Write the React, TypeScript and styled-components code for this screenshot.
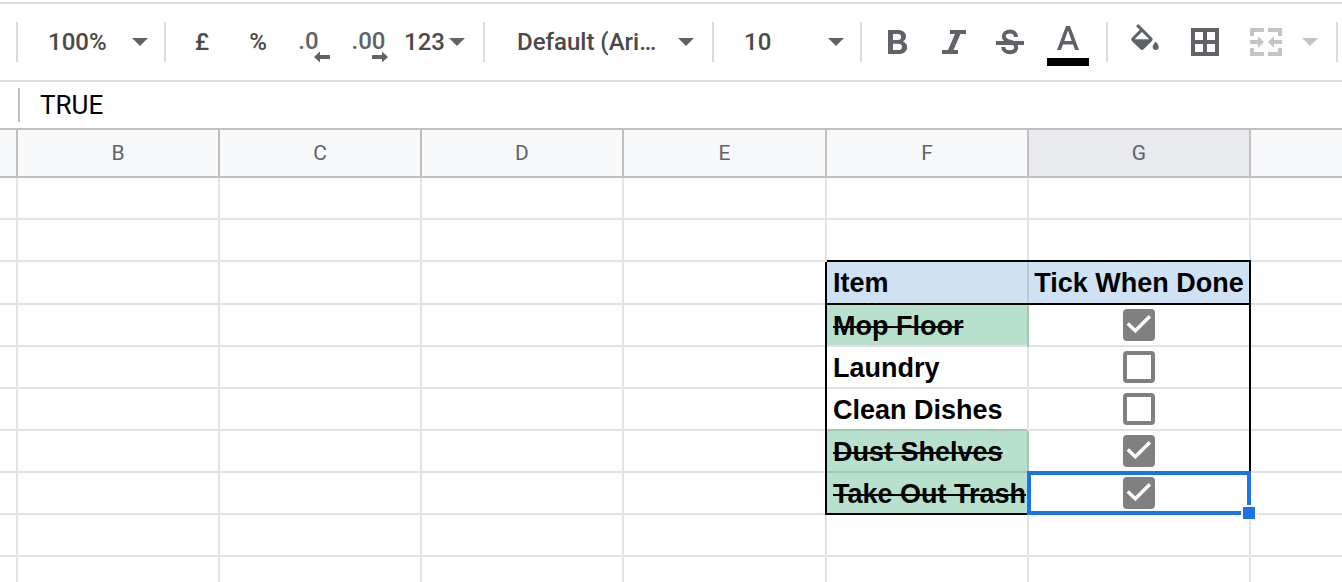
import React from "react";
import styled, { createGlobalStyle } from "styled-components";

const color = {
  rule: "#dadce0",
  headLine: "#c0c0c0",
  gridLine: "#e2e3e3",
  headFill: "#f8f9fa",
  headActive: "#e8eaed",
  icon: "#5f6368",
  text: "#4a4a4a",
  disabled: "#c4c4c4",
  black: "#000000",
  select: "#1a73e8",
  blue: "#cfe2f3",
  blueLine: "#b8c9d8",
  green: "#b7e1cd",
  greenLine: "#a3c8b6",
};

const GlobalStyle = createGlobalStyle`
  *, *::before, *::after { box-sizing: border-box; }
  body { margin: 0; background: #fff; }
`;

const Page = styled.main`
  display: flex;
  flex-direction: column;
  height: 100vh;
  overflow: hidden;
  background: #fff;
  font-family: Roboto, "Liberation Sans", sans-serif;
`;

const Toolbar = styled.div`
  display: flex;
  align-items: center;
  flex: none;
  height: 80px;
  margin-top: 2px;
  padding-left: 16px;
  border-top: 2px solid ${color.rule};
  border-bottom: 2px solid ${color.rule};
  overflow: hidden;
`;

const Divider = styled.span`
  flex: none;
  width: 2px;
  height: 40px;
  background: ${color.rule};
`;

const Group = styled.div`
  display: flex;
  flex: none;
  padding: 0 8px;
`;

const ToolButton = styled.button<{ $width?: number; $gap?: number; $padding?: string }>`
  display: flex;
  align-items: center;
  justify-content: center;
  gap: ${(p) => p.$gap ?? 0}px;
  width: ${(p) => p.$width ?? 56}px;
  height: 48px;
  padding: ${(p) => p.$padding ?? "0"};
  border: 0;
  background: none;
  color: ${(p) => (p.disabled ? color.disabled : color.icon)};
  font: 500 24px/28px Roboto, "Liberation Sans", sans-serif;

  svg {
    display: block;
    flex: none;
  }
`;

const Label = styled.span`
  color: ${color.text};
`;

const DecimalFace = styled.span<{ $overhang: number }>`
  display: flex;
  flex-direction: column;
  padding-top: 6px;

  > span {
    padding-right: ${(p) => p.$overhang}px;
  }

  svg {
    align-self: flex-end;
    margin-top: -4px;
  }
`;

const ColorFace = styled.span`
  display: flex;
  flex-direction: column;
  align-items: center;
  gap: 8px;
  padding-top: 8px;
`;

const Swatch = styled.span`
  width: 42px;
  height: 8px;
  background: ${color.black};
`;

const PickerFrame = styled.label<{ $width: number; $inset: number }>`
  display: grid;
  grid-template-columns: minmax(0, 1fr);
  align-items: center;
  flex: none;
  width: ${(p) => p.$width}px;

  > * {
    grid-area: 1 / 1;
  }

  svg {
    justify-self: end;
    margin-right: ${(p) => p.$inset}px;
    pointer-events: none;
    color: ${color.icon};
  }
`;

const PickerSelect = styled.select<{ $inset: number }>`
  appearance: none;
  width: 100%;
  height: 40px;
  padding: 0 52px 0 ${(p) => p.$inset + 14}px;
  border: 0;
  background: none;
  color: ${color.text};
  font: 500 24px/28px Roboto, "Liberation Sans", sans-serif;
  text-overflow: ellipsis;
`;

const FormulaBar = styled.label`
  display: flex;
  align-items: center;
  flex: none;
  height: 48px;
  padding-left: 18px;
  border-bottom: 2px solid ${color.headLine};
`;

const FormulaDivider = styled.span`
  width: 2px;
  height: 34px;
  background: ${color.headLine};
`;

const FormulaInput = styled.input`
  flex: 1;
  min-width: 0;
  height: 40px;
  padding: 0 20px;
  border: 0;
  outline: 0;
  background: none;
  color: ${color.black};
  font: 400 26px/32px Roboto, "Liberation Sans", sans-serif;
`;

const Sheet = styled.table`
  flex: none;
  width: 100%;
  table-layout: fixed;
  border-collapse: separate;
  border-spacing: 0;
`;

const ColumnHead = styled.th<{ $active?: boolean }>`
  height: 48px;
  padding: 0 2px 2px 0;
  background: ${(p) => (p.$active ? color.headActive : color.headFill)};
  box-shadow: inset -2px -2px 0 ${color.headLine};
  color: ${color.icon};
  font-size: 21px;
  line-height: 24px;
  font-weight: 400;
  text-align: center;

  &:last-child {
    box-shadow: inset 0 -2px 0 ${color.headLine};
  }
`;

type Edge = { $right?: string; $bottom?: string };

const edgeShadow = ({ $right = color.gridLine, $bottom = color.gridLine }: Edge) => {
  const right = `inset -2px 0 0 ${$right}`;
  const bottom = `inset 0 -2px 0 ${$bottom}`;
  return $bottom === color.black ? `${bottom}, ${right}` : `${right}, ${bottom}`;
};

const Cell = styled.td<Edge & { $fill?: string; $center?: boolean; $tall?: boolean }>`
  position: relative;
  height: ${(p) => (p.$tall ? 43 : 42)}px;
  padding: ${(p) => (p.$center ? "0 2px 2px 0" : "0 2px 2px 6px")};
  background: ${(p) => p.$fill ?? "transparent"};
  box-shadow: ${edgeShadow};
  color: ${color.black};
  font: 700 27px/32px "Liberation Sans", Arial, sans-serif;
  text-align: ${(p) => (p.$center ? "center" : "left")};
  white-space: nowrap;

  &:last-child {
    box-shadow: inset 0 -2px 0 ${color.gridLine};
  }
`;

const TaskCell = styled(Cell)<{ $done: boolean }>`
  padding-top: 2px;
  text-decoration: ${(p) => (p.$done ? "line-through 2px" : "none")};
`;

const TickFrame = styled.span`
  display: inline-grid;
  vertical-align: top;

  > * {
    grid-area: 1 / 1;
  }

  svg {
    pointer-events: none;
  }
`;

const TickInput = styled.input`
  appearance: none;
  width: 32px;
  height: 32px;
  margin: 0;
  border: 4px solid #808080;
  border-radius: 4px;
  background: #fff;

  &:checked {
    background: #808080;
  }

  &:not(:checked) + svg {
    visibility: hidden;
  }
`;

const SelectedCell = styled(Cell)`
  z-index: 1;
`;

const Selection = styled.span`
  position: absolute;
  inset: -2px 0 0 -2px;
  border: 4px solid ${color.select};
  pointer-events: none;

  &::after {
    content: "";
    position: absolute;
    right: -10px;
    bottom: -10px;
    width: 16px;
    height: 16px;
    border: 2px solid #fff;
    background: ${color.select};
  }
`;

const Caret = () => (
  <svg width="16" height="8" viewBox="0 0 16 8" aria-hidden="true">
    <path d="M0 0h16L8 8z" fill="currentColor" />
  </svg>
);

const SmallArrow = ({ flip }: { flip?: boolean }) => (
  <svg width="16" height="12" viewBox="0 0 16 12" aria-hidden="true">
    <path
      d={flip ? "M16 6l-6-5.5V4H0v4h10v3.500z" : "M0 6l6-5.5V4h10v4H6v3.500z"}
      fill="currentColor"
    />
  </svg>
);

const BoldIcon = () => (
  <svg width="20" height="24" viewBox="0 0 20 24" aria-hidden="true">
    <path
      fillRule="evenodd"
      fill="currentColor"
      d="M0 0h10c4.600 0 8 2.500 8 6.500 0 2.200-1.200 4-3 5 2.500.9 4.200 3 4.200 5.500 0 4.300-3.500 7-8.200 7H0zM5 4v6h5c1.900 0 3.200-1.200 3.200-3S11.900 4 10 4zM5 13.800V20h5.600c2.100 0 3.400-1.200 3.400-3.100s-1.300-3.100-3.400-3.100z"
    />
  </svg>
);

const ItalicIcon = () => (
  <svg width="24" height="24" viewBox="0 0 24 24" aria-hidden="true">
    <path fill="currentColor" d="M8 0h16v4h-5.500l-7 16H16v4H0v-4h6l7-16H8z" />
  </svg>
);

const StrikeIcon = () => (
  <svg width="28" height="26" viewBox="0 0 28 26" aria-hidden="true">
    <g fill="none" stroke="currentColor" strokeWidth="4">
      <path d="M20 8C20 4.500 17.600 2.500 14 2.500S7.800 4.300 7.800 7.200c0 3.600 3.400 4.800 6.500 5.600 3.400.9 5.900 2.200 5.900 5.400 0 3-2.500 5-6.200 5s-6.800-2-6.800-5.200" />
    </g>
    <path fill="currentColor" d="M0 12h28v4H0z" />
  </svg>
);

const LetterIcon = () => (
  <svg width="22" height="24" viewBox="0 0 22 24" aria-hidden="true">
    <path
      fillRule="evenodd"
      fill="currentColor"
      d="M9 0h4L22 24h-4l-2-5.500H6L4 24H0zM7.300 15h7.400L11 4.600z"
    />
  </svg>
);

const FillIcon = () => (
  <svg width="28" height="26" viewBox="3 0 18 17" aria-hidden="true">
    <path
      fill="currentColor"
      d="M16.560 8.940L7.620 0 6.210 1.410l2.380 2.380-5.150 5.150c-.59.59-.59 1.540 0 2.120l5.500 5.500c.29.29.68.44 1.060.44s.77-.15 1.060-.44l5.500-5.500c.59-.58.59-1.530 0-2.120zM5.210 10L10 5.210 14.790 10H5.210zM19 11.500s-2 2.170-2 3.500c0 1.100.9 2 2 2s2-.9 2-2c0-1.330-2-3.500-2-3.500z"
    />
  </svg>
);

const BordersIcon = () => (
  <svg width="28" height="28" viewBox="0 0 28 28" aria-hidden="true">
    <path fill="none" stroke="currentColor" strokeWidth="4" d="M2 2h24v24H2zM14 2v24M2 14h24" />
  </svg>
);

const MergeIcon = () => (
  <svg width="32" height="28" viewBox="0 0 32 28" aria-hidden="true">
    <path
      fill="currentColor"
      d="M0 0h14v4H4v4H0zM18 0h14v8h-4V4H18zM0 20h4v4h10v4H0zM28 20h4v8H18v-4h10zM0 12h8V8l6 6-6 6v-4H0zM32 12h-8V8l-6 6 6 6v-4h8z"
    />
  </svg>
);

const TickIcon = () => (
  <svg width="32" height="32" viewBox="0 0 32 32" aria-hidden="true">
    <path d="M4.800 14.500l7.500 7.300L26.900 7.200" fill="none" stroke="#fff" strokeWidth="3.400" />
  </svg>
);

type PickerProps = { label: string; value: string; width: number; inset?: number };

const Picker = ({ label, value, width, inset = 16 }: PickerProps) => (
  <PickerFrame $width={width} $inset={inset}>
    <PickerSelect aria-label={label} defaultValue={value} $inset={inset}>
      <option>{value}</option>
    </PickerSelect>
    <Caret />
  </PickerFrame>
);

const Tick = ({ label, done }: { label: string; done: boolean }) => (
  <TickFrame>
    <TickInput type="checkbox" aria-label={label} defaultChecked={done} />
    <TickIcon />
  </TickFrame>
);

const columnWidths = [18, 202, 202, 202, 203, 202, 222];
const letters = ["", "B", "C", "D", "E", "F", "G", ""];

const tasks = [
  { name: "Mop Floor", done: true },
  { name: "Laundry", done: false },
  { name: "Clean Dishes", done: false },
  { name: "Dust Shelves", done: true },
  { name: "Take Out Trash", done: true },
];

const BlankCells = ({ count }: { count: number }) => (
  <>
    {Array.from({ length: count }, (_, i) => (
      <Cell key={i} />
    ))}
  </>
);

export default function App() {
  return (
    <>
      <GlobalStyle />
      <Page>
        <Toolbar role="toolbar" aria-label="Formatting">
          <Divider />
          <Picker label="Zoom" value="100%" width={146} />
          <Divider />
          <Group>
            <ToolButton aria-label="Format as currency">
              <Label>£</Label>
            </ToolButton>
            <ToolButton aria-label="Format as percent">
              <Label>%</Label>
            </ToolButton>
            <ToolButton aria-label="Decrease decimal places">
              <DecimalFace $overhang={11}>
                <span>.0</span>
                <SmallArrow />
              </DecimalFace>
            </ToolButton>
            <ToolButton aria-label="Increase decimal places">
              <DecimalFace $overhang={3}>
                <span>.00</span>
                <SmallArrow flip />
              </DecimalFace>
            </ToolButton>
            <ToolButton aria-label="More formats" $width={77} $gap={4} $padding="0 4px 0 0">
              <Label>123</Label>
              <Caret />
            </ToolButton>
          </Group>
          <Divider />
          <Picker label="Font" value="Default (Arial)" width={227} inset={18} />
          <Divider />
          <Picker label="Font size" value="10" width={146} />
          <Divider />
          <Group>
            <ToolButton aria-label="Bold">
              <BoldIcon />
            </ToolButton>
            <ToolButton aria-label="Italic">
              <ItalicIcon />
            </ToolButton>
            <ToolButton aria-label="Strikethrough">
              <StrikeIcon />
            </ToolButton>
            <ToolButton aria-label="Text color" $width={60}>
              <ColorFace>
                <LetterIcon />
                <Swatch />
              </ColorFace>
            </ToolButton>
          </Group>
          <Divider />
          <Group>
            <ToolButton aria-label="Fill color" $width={60} $padding="0 2px 10px 0">
              <FillIcon />
            </ToolButton>
            <ToolButton aria-label="Borders" $width={60} $padding="0 2px 0 0">
              <BordersIcon />
            </ToolButton>
            <ToolButton
              aria-label="Merge cells"
              $width={92}
              $gap={20}
              $padding="0 0 0 4px"
              disabled
            >
              <MergeIcon />
              <Caret />
            </ToolButton>
          </Group>
          <Divider />
        </Toolbar>

        <FormulaBar>
          <FormulaDivider />
          <FormulaInput aria-label="Formula" defaultValue="TRUE" />
        </FormulaBar>

        <Sheet>
          <colgroup>
            {columnWidths.map((width, i) => (
              <col key={i} width={width} />
            ))}
            <col />
          </colgroup>
          <thead>
            <tr>
              {letters.map((letter, i) => (
                <ColumnHead key={i} scope="col" $active={letter === "G"}>
                  {letter}
                </ColumnHead>
              ))}
            </tr>
          </thead>
          <tbody>
            <tr>
              <BlankCells count={8} />
            </tr>
            <tr>
              <BlankCells count={5} />
              <Cell $bottom={color.black} />
              <Cell $bottom={color.black} />
              <Cell />
            </tr>
            <tr>
              <BlankCells count={4} />
              <Cell $tall $right={color.black} />
              <Cell $tall $fill={color.blue} $right={color.blueLine} $bottom={color.black}>
                Item
              </Cell>
              <Cell $tall $center $fill={color.blue} $right={color.black} $bottom={color.black}>
                Tick When Done
              </Cell>
              <Cell $tall />
            </tr>
            {tasks.map(({ name, done }, i) => {
              const last = i === tasks.length - 1;
              const nextDone = !last && tasks[i + 1].done;
              const TickCell = last ? SelectedCell : Cell;
              return (
                <tr key={name}>
                  <BlankCells count={4} />
                  <Cell $right={color.black} />
                  <TaskCell
                    $done={done}
                    $fill={done ? color.green : undefined}
                    $right={done ? color.greenLine : undefined}
                    $bottom={last ? color.black : nextDone ? color.greenLine : undefined}
                  >
                    {name}
                  </TaskCell>
                  <TickCell $center $right={color.black}>
                    <Tick label={name} done={done} />
                    {last && <Selection />}
                  </TickCell>
                  <Cell />
                </tr>
              );
            })}
            <tr>
              <BlankCells count={8} />
            </tr>
            <tr>
              <BlankCells count={8} />
            </tr>
          </tbody>
        </Sheet>
      </Page>
    </>
  );
}
